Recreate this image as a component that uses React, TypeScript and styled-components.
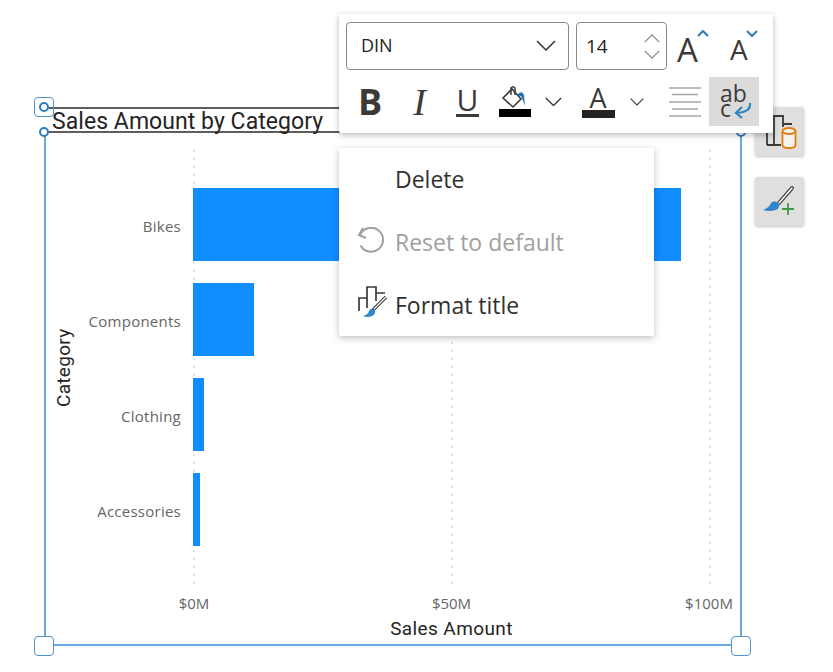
import { createGlobalStyle, styled } from "styled-components";

const GlobalStyle = createGlobalStyle`
  html, body {
    margin: 0;
    padding: 0;
    background: #fff;
  }
  body {
    font-family: "Open Sans", "Liberation Sans", sans-serif;
  }
`;

const Page = styled.div`
  position: relative;
  width: 833px;
  height: 672px;
  overflow: hidden;
  padding: 107px 0 0 44px;
  box-sizing: border-box;
`;

const Visual = styled.div`
  position: relative;
  width: 698px;
  height: 539px;
  display: flex;
  flex-direction: column;
`;

const TitleBar = styled.div`
  height: 26px;
  box-sizing: border-box;
  border-top: 2px solid #605e5c;
  border-bottom: 2px solid #605e5c;
  display: flex;
  align-items: center;
  padding: 2px 0 0 8px;
  font-family: Roboto, sans-serif;
  font-size: 23px;
  letter-spacing: 0.05px;
  color: #252423;
  white-space: nowrap;
`;

const Frame = styled.div`
  flex: 1;
  box-sizing: border-box;
  border: 2px solid #69a9e0;
  border-top: none;
  display: flex;
  flex-direction: column;
`;

const ChartBody = styled.div`
  position: relative;
  display: flex;
  margin-top: 17px;
  height: 438px;
`;

const GridLines = styled.div`
  position: absolute;
  left: 147px;
  top: 0;
  bottom: 0;
  width: 518px;
  display: flex;
  justify-content: space-between;
`;

const GridLine = styled.div`
  width: 2px;
  background-image: repeating-linear-gradient(to bottom, #e0e0e0 0 2px, transparent 2px 8px);
`;

const AxisTitleY = styled.div`
  width: 34px;
  box-sizing: border-box;
  padding-top: 2px;
  padding-right: 1px;
  display: flex;
  align-items: center;
  justify-content: center;
  writing-mode: vertical-rl;
  transform: rotate(180deg);
  font-family: Roboto, sans-serif;
  font-size: 19px;
  letter-spacing: 0.3px;
  color: #252423;
`;

const Rows = styled.div`
  position: relative;
  display: flex;
  flex-direction: column;
  padding-top: 27px;
`;

const Row = styled.div`
  height: 95px;
  display: flex;
  align-items: center;
`;

const RowLabel = styled.div`
  width: 101px;
  margin-right: 12px;
  padding-top: 2px;
  text-align: right;
  font-size: 15px;
  letter-spacing: 0.25px;
  color: #666;
`;

const Track = styled.div`
  width: 515px;
`;

const Bar = styled.div`
  height: 73px;
  background: #118dff;
`;

const Ticks = styled.div`
  margin: 5px 0 0 148px;
  width: 515px;
  display: flex;
  justify-content: space-between;
`;

const Tick = styled.div`
  width: 0;
  display: flex;
  justify-content: center;
  white-space: nowrap;
  font-size: 15px;
  line-height: 20px;
  color: #666;
`;

const AxisTitleX = styled.div`
  margin: 5px 0 0 0;
  padding-left: 117px;
  text-align: center;
  font-family: Roboto, sans-serif;
  font-size: 19px;
  line-height: 22px;
  letter-spacing: 0.4px;
  color: #252423;
`;

const SquareHandle = styled.div<{ $x: number; $y: number }>`
  position: absolute;
  left: ${(p) => p.$x}px;
  top: ${(p) => p.$y}px;
  width: 20px;
  height: 20px;
  box-sizing: border-box;
  border: 1.5px solid #4f93cd;
  border-radius: 4px;
  background: ${(p) => (p.$y < 0 ? "transparent" : "#fff")};
`;

const RoundHandle = styled.div<{ $x: number; $y: number }>`
  position: absolute;
  left: ${(p) => p.$x}px;
  top: ${(p) => p.$y}px;
  width: 10px;
  height: 10px;
  box-sizing: border-box;
  border: 2px solid #2b7cc2;
  border-radius: 50%;
  background: #fff;
`;

const Toolbar = styled.div`
  position: absolute;
  left: 339px;
  top: 14px;
  width: 434px;
  height: 119px;
  box-sizing: border-box;
  padding: 8px 7px 0;
  background: #fff;
  border-radius: 2px;
  box-shadow: 0 2px 6px rgba(0, 0, 0, 0.28);
  display: flex;
  flex-direction: column;
  gap: 7px;
`;

const ToolRow = styled.div`
  display: flex;
  align-items: center;
`;

const FieldBox = styled.div<{ $w: number; $narrow?: boolean }>`
  width: ${(p) => p.$w}px;
  height: 48px;
  box-sizing: border-box;
  border: 1px solid #8a8886;
  border-radius: 4px;
  margin-right: 7px;
  padding: ${(p) => (p.$narrow ? "0 6px 0 9px" : "0 12px 2px 14px")};
  display: flex;
  align-items: center;
  justify-content: space-between;
  font-size: ${(p) => (p.$narrow ? 19 : 18)}px;
  color: #252423;
`;

const Stepper = styled.div`
  display: flex;
  flex-direction: column;
  gap: 7px;
`;

const GrowA = styled.div<{ $size: number; $w: number; $pl?: number }>`
  position: relative;
  width: ${(p) => p.$w}px;
  padding-left: ${(p) => p.$pl ?? 0}px;
  height: 48px;
  display: flex;
  align-items: flex-end;
  font-size: ${(p) => p.$size}px;
  line-height: ${(p) => (p.$size > 30 ? 40 : 42)}px;
  color: #3b3a39;
`;

const Caret = styled.svg<{ $x: number }>`
  position: absolute;
  left: ${(p) => p.$x}px;
  top: 8px;
`;

const Slot = styled.div<{ $w: number; $ml?: number }>`
  width: ${(p) => p.$w}px;
  margin-left: ${(p) => p.$ml ?? 0}px;
  height: 49px;
  display: flex;
  align-items: center;
  justify-content: center;
  color: #3b3a39;
`;

const BoldMark = styled.span`
  font-size: 36px;
  font-weight: 700;
  line-height: 1;
`;

const ItalicMark = styled.span`
  font-family: "Liberation Serif", serif;
  font-style: italic;
  font-size: 38px;
  line-height: 1;
`;

const UnderlineMark = styled.span`
  font-size: 30px;
  line-height: 28px;
  height: 28px;
  padding: 0 1px;
  border-bottom: 3px solid #3b3a39;
`;

const ColorMark = styled.div`
  width: 33px;
  display: flex;
  flex-direction: column;
  align-items: center;
  font-size: 27px;
  line-height: 24px;
  &::after {
    content: "";
    width: 33px;
    height: 8px;
    background: #252423;
  }
`;

const WrapButton = styled.div`
  position: relative;
  width: 50px;
  height: 49px;
  background: #dcdbda;
  padding: 9px 0 0 11px;
  box-sizing: border-box;
  font-size: 23px;
  line-height: 15px;
  color: #3b3a39;
`;

const WrapArrow = styled.svg`
  position: absolute;
  left: 24px;
  top: 25px;
`;

const Menu = styled.div`
  position: absolute;
  left: 339px;
  top: 148px;
  width: 315px;
  height: 188px;
  box-sizing: border-box;
  background: #fff;
  border-radius: 2px;
  box-shadow: 0 2px 7px rgba(0, 0, 0, 0.26);
  display: flex;
  flex-direction: column;
`;

const MenuItem = styled.div<{ $disabled?: boolean }>`
  height: 63px;
  display: flex;
  align-items: center;
  font-size: 23px;
  color: ${(p) => (p.$disabled ? "#a19f9d" : "#323130")};
`;

const MenuIcon = styled.div`
  width: 56px;
  display: flex;
  justify-content: center;
  padding-left: 10px;
  box-sizing: border-box;
`;

const SideButtons = styled.div`
  position: absolute;
  left: 755px;
  top: 107px;
  display: flex;
  flex-direction: column;
  gap: 21px;
`;

const SideButton = styled.div`
  width: 49px;
  height: 49px;
  background: #e1dfdd;
  border-radius: 3px;
  box-shadow: 0 1px 3px rgba(0, 0, 0, 0.25);
`;

const categories = [
  { name: "Bikes", value: 94.7 },
  { name: "Components", value: 11.9 },
  { name: "Clothing", value: 2.2 },
  { name: "Accessories", value: 1.3 },
];

function Chevron({ up, size = 20, color = "#3b3a39" }: { up?: boolean; size?: number; color?: string }) {
  return (
    <svg width={size} height={size / 2 + 1} viewBox="0 0 20 11" fill="none">
      <path d={up ? "M1 10 L10 1 L19 10" : "M1 1 L10 10 L19 1"} stroke={color} strokeWidth="1.6" />
    </svg>
  );
}

function FillIcon() {
  return (
    <svg width="34" height="31" viewBox="0 0 34 31" fill="none">
      <path d="M5 12 L14 3 L23 13 L15 21 Z" stroke="#3b3a39" strokeWidth="1.6" />
      <path d="M13 9 V2 Q15 -0.5 17 2 V9" stroke="#3b3a39" strokeWidth="1.5" />
      <path d="M20 8 Q24 4 26 9 L27 20 L24 12 Q23 9 20 10 Z" fill="#1f72b8" />
      <rect x="1" y="23" width="32" height="8" fill="#000" />
    </svg>
  );
}

function AlignIcon() {
  return (
    <svg width="32" height="30" viewBox="0 0 32 30" stroke="#a6a6a6" strokeWidth="1.5">
      <path d="M0 1 H32 M3 7.5 H29 M0 15 H32 M3 22 H29 M0 29 H32" />
    </svg>
  );
}

function ResetIcon() {
  return (
    <svg width="30" height="30" viewBox="0 0 30 30" fill="none" stroke="#a19f9d" strokeWidth="2">
      <path d="M6 1 L2 8 L9 11" />
      <path d="M3 8 A12 12 0 1 1 3.5 18.500" />
    </svg>
  );
}

function FormatIcon() {
  return (
    <svg width="30" height="32" viewBox="0 4 30 32" fill="none" overflow="visible">
      <path d="M2 26 V13 H10 V2 H19 V8 H28 M10 13 V23 M19 8 V16" stroke="#3b3a39" strokeWidth="1.7" />
      <path d="M29 12 L16 25" stroke="#3b3a39" strokeWidth="3.4" />
      <path d="M29 12 L17 24" stroke="#fff" strokeWidth="1.2" />
      <path d="M6 31 Q11 30 12 26 Q14 22 18 25 Q19 29 15 31 Q10 33 6 31 Z" fill="#2f86c9" />
    </svg>
  );
}

function DataIcon() {
  return (
    <svg width="49" height="49" viewBox="0 0 49 49" fill="none">
      <path d="M12 38 V23 H19 V9 H28 V17 H37 M12 38 H26 M19 23 V38 M28 9 V20" stroke="#3b3a39" strokeWidth="1.8" />
      <path d="M27.500 24 V38 Q27.500 41 34 41 Q40.500 41 40.500 38 V24" fill="#f4f2f0" stroke="#e07d10" strokeWidth="1.8" />
      <ellipse cx="34" cy="24" rx="6.500" ry="3" fill="#f4f2f0" stroke="#e07d10" strokeWidth="1.8" />
    </svg>
  );
}

function BrushIcon() {
  return (
    <svg width="49" height="49" viewBox="0 0 49 49" fill="none">
      <path d="M37 11 L24 26" stroke="#3b3a39" strokeWidth="4" strokeLinecap="round" />
      <path d="M37 11 L24 26" stroke="#fff" strokeWidth="1.6" strokeLinecap="round" />
      <path d="M8 33 Q14 31 16 26 Q20 22 24 27 Q25 31 21 33 Q14 35 8 33 Z" fill="#2f86c9" />
      <path d="M33 26 V38 M27 32 H39" stroke="#3f9b4b" strokeWidth="1.8" />
    </svg>
  );
}

export default function App() {
  return (
    <>
      <GlobalStyle />
      <Page>
        <Visual>
          <TitleBar>Sales Amount by Category</TitleBar>
          <Frame>
            <ChartBody>
              <GridLines>
                <GridLine />
                <GridLine />
                <GridLine />
              </GridLines>
              <AxisTitleY>Category</AxisTitleY>
              <Rows>
                {categories.map((c) => (
                  <Row key={c.name}>
                    <RowLabel>{c.name}</RowLabel>
                    <Track>
                      <Bar style={{ width: `${c.value}%` }} />
                    </Track>
                  </Row>
                ))}
              </Rows>
            </ChartBody>
            <Ticks>
              <Tick>$0M</Tick>
              <Tick>$50M</Tick>
              <Tick>$100M</Tick>
            </Ticks>
            <AxisTitleX>Sales Amount</AxisTitleX>
          </Frame>
          <SquareHandle $x={-10} $y={-10} />
          <SquareHandle $x={-10} $y={529} />
          <SquareHandle $x={687} $y={529} />
          <RoundHandle $x={-5} $y={-5} />
          <RoundHandle $x={-5} $y={20} />
          <RoundHandle $x={692} $y={20} />
        </Visual>

        <SideButtons>
          <SideButton>
            <DataIcon />
          </SideButton>
          <SideButton>
            <BrushIcon />
          </SideButton>
        </SideButtons>

        <Menu>
          <MenuItem>
            <MenuIcon />
            Delete
          </MenuItem>
          <MenuItem $disabled>
            <MenuIcon>
              <ResetIcon />
            </MenuIcon>
            Reset to default
          </MenuItem>
          <MenuItem>
            <MenuIcon>
              <FormatIcon />
            </MenuIcon>
            Format title
          </MenuItem>
        </Menu>

        <Toolbar>
          <ToolRow>
            <FieldBox $w={223}>
              DIN
              <Chevron />
            </FieldBox>
            <FieldBox $w={91} $narrow>
              14
              <Stepper>
                <Chevron up size={16} color="#8a8886" />
                <Chevron size={16} color="#8a8886" />
              </Stepper>
            </FieldBox>
            <GrowA $size={33} $w={53} $pl={3}>
              A
              <Caret $x={23} width="12" height="7" viewBox="0 0 12 7" fill="none">
                <path d="M1 6 L6 1 L11 6" stroke="#2b7cb3" strokeWidth="2" />
              </Caret>
            </GrowA>
            <GrowA $size={28} $w={30}>
              A
              <Caret $x={16} width="12" height="7" viewBox="0 0 12 7" fill="none">
                <path d="M1 1 L6 6 L11 1" stroke="#2b7cb3" strokeWidth="2" />
              </Caret>
            </GrowA>
          </ToolRow>
          <ToolRow>
            <Slot $w={48}>
              <BoldMark>B</BoldMark>
            </Slot>
            <Slot $w={51}>
              <ItalicMark>I</ItalicMark>
            </Slot>
            <Slot $w={45}>
              <UnderlineMark>U</UnderlineMark>
            </Slot>
            <Slot $w={50}>
              <FillIcon />
            </Slot>
            <Slot $w={26}>
              <Chevron size={17} />
            </Slot>
            <Slot $w={64}>
              <ColorMark>A</ColorMark>
            </Slot>
            <Slot $w={14}>
              <Chevron size={17} />
            </Slot>
            <Slot $w={48} $ml={17}>
              <AlignIcon />
            </Slot>
            <WrapButton>
              ab
              <br />c
              <WrapArrow width="22" height="18" viewBox="0 0 22 18" fill="none" stroke="#2b85c4" strokeWidth="2.2">
                <path d="M17 1 Q18 10 4 11" />
                <path d="M9 5 L3 11 L9 16" />
              </WrapArrow>
            </WrapButton>
          </ToolRow>
        </Toolbar>
      </Page>
    </>
  );
}
